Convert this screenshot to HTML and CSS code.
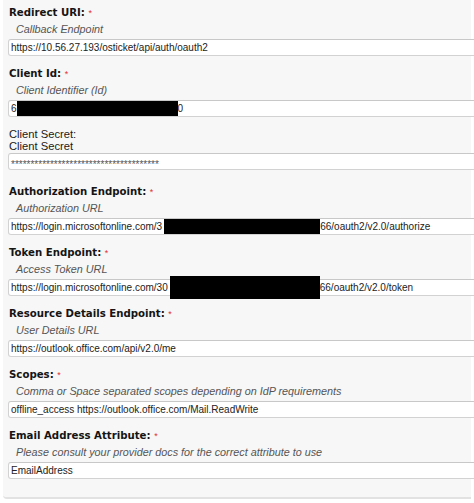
FILE: index.html
```html
<!DOCTYPE html>
<html>
<head>
<meta charset="utf-8">
<title>OAuth2 settings</title>
<link rel="stylesheet" href="styles.css">
</head>
<body>
<div class="panel">
  <div class="field">
    <div class="label">Redirect URI: <span class="req">*</span></div>
    <div class="hint">Callback Endpoint</div>
    <div class="input">https://10.56.27.193/osticket/api/auth/oauth2</div>
  </div>
  <div class="field">
    <div class="label">Client Id: <span class="req">*</span></div>
    <div class="hint">Client Identifier (Id)</div>
    <div class="input">6<span class="redact w-client"></span>0</div>
  </div>
  <div class="field plain">
    <div class="plain-label">Client Secret:</div>
    <div class="plain-label">Client Secret</div>
    <div class="input"><span class="dots">**************************************</span></div>
  </div>
  <div class="field">
    <div class="label">Authorization Endpoint: <span class="req">*</span></div>
    <div class="hint">Authorization URL</div>
    <div class="input">https://login.microsoftonline.com/3<span class="redact w-auth"></span>66/oauth2/v2.0/authorize</div>
  </div>
  <div class="field">
    <div class="label">Token Endpoint: <span class="req">*</span></div>
    <div class="hint">Access Token URL</div>
    <div class="input">https://login.microsoftonline.com/30<span class="redact w-token tall"></span>66/oauth2/v2.0/token</div>
  </div>
  <div class="field">
    <div class="label">Resource Details Endpoint: <span class="req">*</span></div>
    <div class="hint">User Details URL</div>
    <div class="input">https://outlook.office.com/api/v2.0/me</div>
  </div>
  <div class="field">
    <div class="label">Scopes: <span class="req">*</span></div>
    <div class="hint">Comma or Space separated scopes depending on IdP requirements</div>
    <div class="input">offline_access https://outlook.office.com/Mail.ReadWrite</div>
  </div>
  <div class="field">
    <div class="label">Email Address Attribute: <span class="req">*</span></div>
    <div class="hint">Please consult your provider docs for the correct attribute to use</div>
    <div class="input">EmailAddress</div>
  </div>
</div>
</body>
</html>
```
FILE: styles.css
```css
html, body {
  margin: 0;
  padding: 0;
  background: #ffffff;
  overflow: hidden;
}

.panel {
  margin-left: 3px;
  width: 468px;
  box-sizing: border-box;
  background: #f7f7f7;
  padding: 5px 0 18px 5px;
  border-bottom: 2px solid #e2e2e2;
  border-bottom-left-radius: 4px;
  display: flex;
  flex-direction: column;
  gap: 10px;
}

.field {
  display: flex;
  flex-direction: column;
}

.field.plain {
  margin-bottom: 4px;
}

.label {
  font-family: "DejaVu Sans", Verdana, sans-serif;
  font-weight: bold;
  font-size: 10.2px;
  line-height: 16px;
  height: 16px;
  color: #141414;
  padding-left: 1px;
  white-space: nowrap;
}

.req {
  color: #e03030;
  font-weight: normal;
  font-size: 9px;
  line-height: 1;
  font-family: "Liberation Sans", Arial, sans-serif;
}

.hint {
  font-family: "Liberation Sans", Arial, sans-serif;
  font-style: italic;
  font-size: 10.8px;
  line-height: 16px;
  height: 16px;
  color: #555555;
  padding-left: 8px;
  margin-bottom: 2px;
  white-space: nowrap;
}

.plain-label {
  font-family: "Liberation Sans", Arial, sans-serif;
  font-size: 11.2px;
  line-height: 12px;
  height: 12px;
  color: #1a1a1a;
  padding-left: 1px;
}

.plain-label:first-child {
  margin-top: 1px;
}

.plain-label + .input {
  margin-top: 1px;
}

.input {
  display: flex;
  align-items: center;
  width: 480px;
  height: 17px;
  flex: none;
  box-sizing: border-box;
  background: #ffffff;
  border: 1px solid #d2d2d2;
  border-top-color: #c8c8c8;
  border-radius: 3px 0 0 3px;
  padding-left: 2px;
  font-family: "Liberation Sans", Arial, sans-serif;
  font-size: 10px;
  color: #222222;
  white-space: nowrap;
}

.redact {
  display: inline-block;
  flex: none;
  height: 15px;
  background: #000000;
}

.redact.tall {
  height: 23px;
}

.w-client { width: 161px; }
.w-auth { width: 156px; margin-left: 2px; }
.w-token { width: 150px; margin-left: 2px; }

.dots {
  font-size: 10px;
  color: #555555;
  padding-top: 6px;
  letter-spacing: 0;
}
```
